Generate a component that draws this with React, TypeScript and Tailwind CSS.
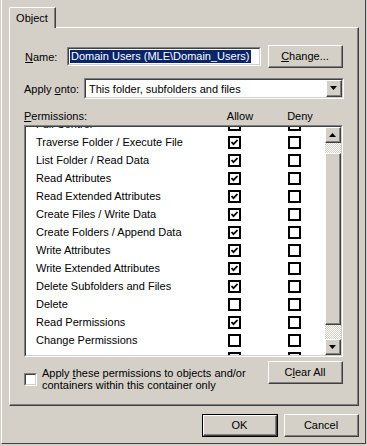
import React from 'react';

const rows: { name: string; allow: boolean }[] = [
  { name: 'Full Control', allow: false },
  { name: 'Traverse Folder / Execute File', allow: true },
  { name: 'List Folder / Read Data', allow: true },
  { name: 'Read Attributes', allow: true },
  { name: 'Read Extended Attributes', allow: true },
  { name: 'Create Files / Write Data', allow: true },
  { name: 'Create Folders / Append Data', allow: true },
  { name: 'Write Attributes', allow: true },
  { name: 'Write Extended Attributes', allow: true },
  { name: 'Delete Subfolders and Files', allow: true },
  { name: 'Delete', allow: false },
  { name: 'Read Permissions', allow: true },
  { name: 'Change Permissions', allow: false },
  { name: '', allow: false },
];

function Raised({ className = '', children }: { className?: string; children?: React.ReactNode }) {
  return (
    <div className={`border-t border-l border-t-white border-l-white border-r border-b border-r-[#404040] border-b-[#404040] bg-[#d4d0c8] ${className}`}>
      <div className="w-full h-full border-r border-b border-r-[#808080] border-b-[#808080] flex items-center justify-center">
        {children}
      </div>
    </div>
  );
}

function Sunken({ className = '', children }: { className?: string; children?: React.ReactNode }) {
  return (
    <div className={`border-t border-l border-t-[#808080] border-l-[#808080] border-r border-b border-r-white border-b-white ${className}`}>
      <div className="w-full h-full border-t border-l border-t-[#404040] border-l-[#404040] border-r border-b border-r-[#d4d0c8] border-b-[#d4d0c8] bg-white relative overflow-hidden">
        {children}
      </div>
    </div>
  );
}

function Check({ on }: { on: boolean }) {
  return (
    <svg width="13" height="13" viewBox="0 0 13 13" className="block shrink-0">
      <rect x="1" y="1" width="11" height="11" fill="#fff" stroke="#000" strokeWidth="2" />
      {on && <path d="M3.5 6 L5.5 8.2 L9.5 4" fill="none" stroke="#000" strokeWidth="1.8" />}
    </svg>
  );
}

function Arrow({ up }: { up?: boolean }) {
  return (
    <svg width="7" height="4" viewBox="0 0 7 4" className="block">
      <path d={up ? 'M3.5 0 L7 4 L0 4 Z' : 'M0 0 L7 0 L3.5 4 Z'} fill="#000" />
    </svg>
  );
}

const checker =
  'bg-[repeating-conic-gradient(#d4d0c8_0_25%,#ffffff_0_50%)] bg-[length:2px_2px]';

export default function App() {
  return (
    <div className="w-[367px] h-[446px] bg-[#d4d0c8] text-black text-[11px] leading-[12px] font-['Liberation_Sans',Arial,sans-serif] select-none">
      <div className="ml-[1px] w-[365px] h-[444px] border-l border-l-white border-r border-r-[#404040] border-b border-b-[#404040] pt-[7px] pl-[7px]">
        {/* tab */}
        <div className="relative z-10 -mb-[1px] w-[47px] h-[21px] bg-[#d4d0c8] border-t border-l border-t-white border-l-white rounded-tl-[2px] border-r border-r-[#404040]">
          <div className="h-full border-r border-r-[#808080] flex items-center justify-center pb-[1px]">
            Object
          </div>
        </div>

        {/* panel */}
        <div className="w-[350px] h-[379px] border-t border-l border-t-white border-l-white border-r border-b border-r-[#404040] border-b-[#404040]">
          <div className="w-full h-full border-r border-b border-r-[#808080] border-b-[#808080] pl-[14px] pt-[17px]">
            <div className="flex items-center h-[23px]">
              <span className="w-[43px] pl-[1px]">
                <u>N</u>ame:
              </span>
              <Sunken className="w-[194px] h-[19px]">
                <div className="flex items-center h-full pl-[1px]">
                  <span className="bg-[#0a246a] text-white px-[1px] leading-[13px] whitespace-nowrap">
                    Domain Users (MLE\Domain_Users)
                  </span>
                </div>
              </Sunken>
              <Raised className="ml-[7px] w-[75px] h-[23px]">
                <span>
                  <u>C</u>hange...
                </span>
              </Raised>
            </div>

            <div className="flex items-center h-[21px] mt-[10px]">
              <span className="w-[60px] whitespace-nowrap">
                Apply <u>o</u>nto:
              </span>
              <Sunken className="w-[260px] h-[21px]">
                <div className="flex items-center h-full pl-[3px] justify-between">
                  <span className="whitespace-nowrap">This folder, subfolders and files</span>
                  <Raised className="w-[16px] h-[17px]">
                    <Arrow />
                  </Raised>
                </div>
              </Sunken>
            </div>

            <div className="flex items-end h-[12px] mt-[11px] relative">
              <span>
                <u>P</u>ermissions:
              </span>
              <span className="absolute left-[200px] w-[32px] text-center">Allow</span>
              <span className="absolute left-[260px] w-[32px] text-center">Deny</span>
            </div>

            <Sunken className="w-[319px] h-[232px] mt-[3px]">
              <div className="flex h-full">
                <div className="flex-1 overflow-hidden">
                  <div className="-mt-[12px]">
                    {rows.map((r, i) => (
                      <div key={i} className="flex items-center h-[18px]">
                        <span className="w-[202px] shrink-0 pl-[10px] whitespace-nowrap">{r.name}</span>
                        <Check on={r.allow} />
                        <span className="w-[47px] shrink-0" />
                        <Check on={false} />
                      </div>
                    ))}
                  </div>
                </div>
                <div className="w-[16px] flex flex-col">
                  <Raised className="w-[16px] h-[16px]">
                    <Arrow up />
                  </Raised>
                  <div className={`h-[10px] ${checker}`} />
                  <Raised className="w-[16px] flex-1" />
                  <div className={`h-[14px] ${checker}`} />
                  <Raised className="w-[16px] h-[16px]">
                    <Arrow />
                  </Raised>
                </div>
              </div>
            </Sunken>

            <div className="flex justify-between mt-[4px] w-[319px]">
              <div className="flex items-center gap-[5px] mt-[6px]">
                <Sunken className="w-[13px] h-[13px] shrink-0" />
                <div className="leading-[12px]">
                  <div>
                    Apply <u>t</u>hese permissions to objects and/or
                  </div>
                  <div>containers within this container only</div>
                </div>
              </div>
              <Raised className="w-[75px] h-[23px] shrink-0">
                <span>
                  C<u>l</u>ear All
                </span>
              </Raised>
            </div>
          </div>
        </div>

        {/* bottom buttons */}
        <div className="flex justify-end gap-[6px] mt-[8px] pr-[6px]">
          <div className="w-[76px] h-[23px] border border-black">
            <Raised className="w-full h-full">OK</Raised>
          </div>
          <Raised className="w-[75px] h-[23px]">Cancel</Raised>
        </div>
      </div>
    </div>
  );
}
